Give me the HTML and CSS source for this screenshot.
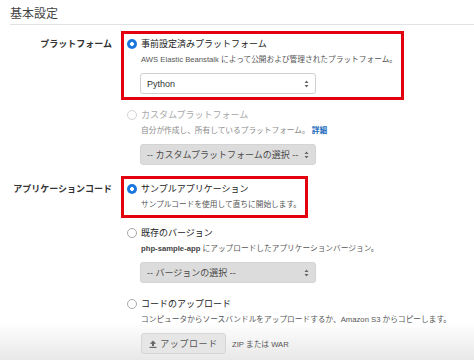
FILE: index.html
```html
<!DOCTYPE html>
<html lang="ja">
<head>
<meta charset="utf-8">
<title>基本設定</title>
<link rel="stylesheet" href="styles.css">
</head>
<body>
<div class="page">
  <h2 class="section-title">基本設定</h2>
  <div class="form">
    <div class="row">
      <div class="label">プラットフォーム</div>
      <div class="options">
        <div class="option highlight">
          <span class="radio checked"></span>
          <div class="body">
            <div class="opt-title">事前設定済みプラットフォーム</div>
            <div class="desc">AWS Elastic Beanstalk によって公開および管理されたプラットフォーム。</div>
            <div class="select">
              <span>Python</span>
              <svg class="arrows" width="5" height="8" viewBox="0 0 5 8"><path d="M2.5 0.5 L4.5 3 H0.5 Z M2.5 7.5 L4.5 5 H0.5 Z" fill="#666"/></svg>
            </div>
          </div>
        </div>
        <div class="option disabled">
          <span class="radio"></span>
          <div class="body">
            <div class="opt-title">カスタムプラットフォーム</div>
            <div class="desc">自分が作成し、所有しているプラットフォーム。 <a class="link" href="#">詳細</a></div>
            <div class="select gray">
              <span>-- カスタムプラットフォームの選択 --</span>
              <svg class="arrows" width="5" height="8" viewBox="0 0 5 8"><path d="M2.5 0.5 L4.5 3 H0.5 Z M2.5 7.5 L4.5 5 H0.5 Z" fill="#666"/></svg>
            </div>
          </div>
        </div>
      </div>
    </div>
    <div class="row">
      <div class="label">アプリケーションコード</div>
      <div class="options">
        <div class="option highlight">
          <span class="radio checked"></span>
          <div class="body">
            <div class="opt-title">サンプルアプリケーション</div>
            <div class="desc">サンプルコードを使用して直ちに開始します。</div>
          </div>
        </div>
        <div class="option">
          <span class="radio"></span>
          <div class="body">
            <div class="opt-title">既存のバージョン</div>
            <div class="desc"><b class="app">php-sample-app</b> にアップロードしたアプリケーションバージョン。</div>
            <div class="select gray">
              <span>-- バージョンの選択 --</span>
              <svg class="arrows" width="5" height="8" viewBox="0 0 5 8"><path d="M2.5 0.5 L4.5 3 H0.5 Z M2.5 7.5 L4.5 5 H0.5 Z" fill="#666"/></svg>
            </div>
          </div>
        </div>
        <div class="option">
          <span class="radio"></span>
          <div class="body">
            <div class="opt-title">コードのアップロード</div>
            <div class="desc">コンピュータからソースバンドルをアップロードするか、Amazon S3 からコピーします。</div>
            <div class="upload-row">
              <button class="btn" type="button">
                <svg class="up-icon" width="8" height="8" viewBox="0 0 8 8"><path d="M4 0.6 L7.2 3.8 H5 V6 H3 V3.8 H0.8 Z" fill="#666"/><rect x="0.5" y="6.8" width="7" height="1.2" fill="#666"/></svg>
                <span>アップロード</span>
              </button>
              <span class="hint">ZIP または WAR</span>
            </div>
          </div>
        </div>
      </div>
    </div>
  </div>
</div>
</body>
</html>
```

FILE: styles.css
```css
* { box-sizing: border-box; }

html, body {
  margin: 0;
  padding: 0;
}

body {
  width: 474px;
  height: 360px;
  overflow: hidden;
  font-family: "Liberation Sans", "Noto Sans CJK JP", sans-serif;
  color: #333;
  background: linear-gradient(to bottom, #fff 0, #fff 322px, #e8e8e8 360px);
}

.section-title {
  margin: 0 0 8px 10px;
  padding: 6px 0 2px;
  font-size: 12px;
  line-height: 16px;
  font-weight: normal;
  color: #444;
  border-bottom: 1px solid #e2e2e2;
}

.form {
  display: flex;
  flex-direction: column;
  gap: 9px;
}

.row {
  display: grid;
  grid-template-columns: 112px 1fr;
  column-gap: 11px;
}

.label {
  padding-top: 4px;
  text-align: right;
  font-size: 9px;
  line-height: 14px;
  font-weight: bold;
  color: #333;
  white-space: nowrap;
}

.options {
  display: flex;
  flex-direction: column;
  gap: 6px;
}

.option {
  display: grid;
  grid-template-columns: 10px auto;
  column-gap: 4px;
  width: fit-content;
  padding: 4px 5px 4px 4px;
}

.option.highlight {
  outline: 3px solid #e3000f;
  outline-offset: -1px;
}

.radio {
  width: 10px;
  height: 10px;
  margin-top: 2px;
  border-radius: 50%;
  border: 1px solid #a8a8a8;
  background: #fff;
}

.radio.checked {
  border: none;
  background: radial-gradient(circle, #fff 0, #fff 1.6px, #1c78dd 2.2px);
}

.disabled .radio {
  border-color: #d2d2d2;
}

.opt-title {
  font-size: 9px;
  line-height: 14px;
  color: #222;
  white-space: nowrap;
}

.disabled .opt-title {
  color: #a8a8a8;
}

.desc {
  margin-top: 2px;
  font-size: 7.7px;
  line-height: 14px;
  color: #555;
  white-space: nowrap;
}

.disabled .desc {
  color: #8a8a8a;
}

.link {
  color: #1a6bbd;
  font-weight: bold;
  text-decoration: none;
}

.app {
  font-weight: bold;
  color: #444;
}

.select {
  display: flex;
  align-items: center;
  justify-content: space-between;
  width: 176px;
  height: 21px;
  margin-top: 6px;
  margin-left: -1px;
  padding: 0 6px;
  border: 1px solid #d0d0d0;
  border-radius: 3px;
  background: #fff;
  font-size: 9px;
  color: #333;
}

.select.gray {
  background: #dcdcdc;
  border-color: #d4d4d4;
  color: #4a4a4a;
}

.upload-row {
  display: flex;
  align-items: center;
  gap: 6px;
  margin-top: 6px;
}

.btn {
  display: flex;
  align-items: center;
  justify-content: center;
  gap: 3px;
  width: 85px;
  height: 21px;
  margin: 0;
  padding: 0;
  border: 1px solid #d6d6d6;
  border-radius: 3px;
  background: #e6e6e6;
  font-family: inherit;
  font-size: 9px;
  color: #555;
  letter-spacing: 0.6px;
}

.hint {
  font-size: 7.7px;
  color: #555;
}
```
